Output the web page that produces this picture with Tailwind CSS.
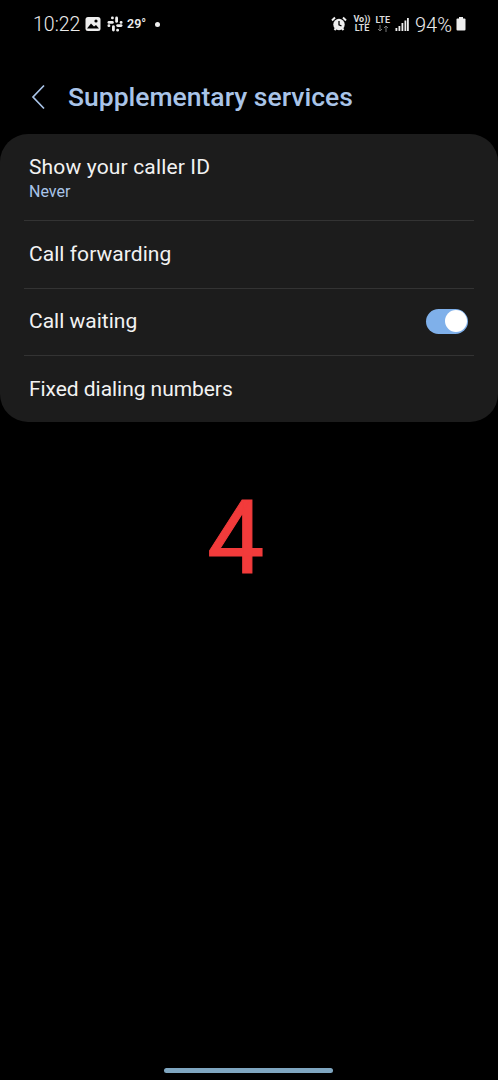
<!DOCTYPE html>
<html lang="en">
<head>
  <meta charset="UTF-8">
  <meta name="viewport" content="width=device-width, initial-scale=1.0">
  <title>Supplementary services</title>
  <script src="https://cdn.jsdelivr.net/npm/@tailwindcss/browser@4"></script>
</head>
<body class="bg-black text-white font-['Roboto',sans-serif]">
<div class="flex flex-col h-[1080px] w-[498px] overflow-hidden">

  <!-- status bar -->
  <div class="flex items-center h-[48px] pl-[33px] pr-[32px] text-[#ececec]">
    <span class="text-[19.5px] font-light w-[47px] mt-[1px]">10:22</span>
    <svg class="ml-[5px]" width="16" height="16" viewBox="0 0 16 16"><rect x="0.5" y="1" width="15" height="14" rx="2.5" fill="#eee"/><circle cx="11" cy="5" r="1.6" fill="#000"/><path d="M2 12.5 L6 7.5 L9 10.5 L11 9 L14 12.5 Z" fill="#000"/></svg>
    <svg class="ml-[6px]" width="16" height="16" viewBox="0 0 16 16" fill="#eee"><rect x="0.5" y="5" width="6.3" height="2.8" rx="1.4"/><rect x="4" y="0.5" width="2.8" height="2.8" rx="1.2"/><rect x="8.2" y="0.5" width="2.8" height="6.3" rx="1.4"/><rect x="12.7" y="5" width="2.8" height="2.8" rx="1.2"/><rect x="9.2" y="8.2" width="6.3" height="2.8" rx="1.4"/><rect x="9.2" y="12.7" width="2.8" height="2.8" rx="1.2"/><rect x="5" y="9.2" width="2.8" height="6.3" rx="1.4"/><rect x="0.5" y="8.2" width="2.8" height="2.8" rx="1.2"/></svg>
    <span class="ml-[4px] text-[12.5px] font-semibold">29°</span>
    <span class="ml-[9px] w-[5px] h-[5px] rounded-full bg-[#eee]"></span>

    <div class="ml-auto flex items-center">
      <svg width="16" height="16" viewBox="0 0 16 16"><path d="M1 4.5 L4 1.5 M15 4.5 L12 1.5 M3.5 14 L4.8 12.5 M12.5 14 L11.2 12.5" stroke="#eee" stroke-width="2" fill="none"/><circle cx="8" cy="8.5" r="5.7" fill="#eee"/><path d="M8 5 V8.8 L10.5 10" stroke="#000" stroke-width="1.3" fill="none"/></svg>
      <div class="ml-[6px] flex flex-col items-center text-[9px] leading-[9px] font-bold text-[#dcdcdc]">
        <span>Vo))</span><span>LTE</span>
      </div>
      <div class="ml-[5px] flex flex-col items-center">
        <span class="text-[9px] leading-[9px] font-bold text-[#dcdcdc]">LTE</span>
        <svg width="12" height="7" viewBox="0 0 12 7"><path d="M3 0 V6 M1 4 L3 6 L5 4" stroke="#777" fill="none"/><path d="M9 7 V1 M7 3 L9 1 L11 3" stroke="#777" fill="none"/></svg>
      </div>
      <svg class="ml-[5px]" width="14" height="14" viewBox="0 0 14 14" fill="#eee"><rect x="0.5" y="11" width="1.8" height="3"/><rect x="3.5" y="9" width="1.8" height="5"/><rect x="6.5" y="6" width="1.8" height="8"/><rect x="9.5" y="3.5" width="1.8" height="10.5"/><rect x="12" y="1" width="1.8" height="13"/></svg>
      <span class="ml-[6px] text-[20px] font-light mt-[1px]">94%</span>
      <svg class="ml-[4px]" width="10" height="14" viewBox="0 0 10 14" fill="#eee"><rect x="3" y="0" width="4" height="2"/><rect x="0.5" y="1.5" width="9" height="12" rx="1"/></svg>
    </div>
  </div>

  <!-- header -->
  <div class="flex items-center h-[86px] pl-[30px] pt-[12px]">
    <svg width="16" height="26" viewBox="0 0 16 26" fill="none"><path d="M14 1.5 L3 13 L14 24.5" stroke="#a9c4e8" stroke-width="1.7"/></svg>
    <h1 class="ml-[22px] text-[26.5px] font-medium text-[#a9c4e8]">Supplementary services</h1>
  </div>

  <!-- settings card -->
  <div class="bg-[#1c1c1c] rounded-[28px] px-[24px]">
    <div class="h-[87px] pl-[5px] pt-[20px] border-b border-[#333]">
      <p class="text-[21px] leading-[26px] tracking-[0.15px] text-[#f2f2f2]">Show your caller ID</p>
      <p class="text-[16px] leading-[24px] text-[#a9c4e8]">Never</p>
    </div>
    <div class="h-[68px] pl-[5px] flex items-center border-b border-[#333]">
      <p class="text-[21px] tracking-[0.05px] text-[#f2f2f2]">Call forwarding</p>
    </div>
    <div class="h-[67px] pl-[5px] flex items-center justify-between border-b border-[#333]">
      <p class="text-[21px] text-[#f2f2f2]">Call waiting</p>
      <div class="flex items-center justify-end w-[42px] h-[25px] mr-[6px] mb-[2px] px-[1px] rounded-full bg-[#7fb0ea]">
        <span class="w-[22px] h-[22px] rounded-full bg-white"></span>
      </div>
    </div>
    <div class="h-[66px] pl-[5px] pt-[1px] flex items-center">
      <p class="text-[21px] tracking-[-0.05px] text-[#f2f2f2]">Fixed dialing numbers</p>
    </div>
  </div>

  <!-- big number -->
  <div class="mt-[56px] pl-[207px] h-[120px] text-[102px] leading-[120px] font-normal text-[#f23b3b] [-webkit-text-stroke:1px_#f23b3b]">4</div>

  <!-- home indicator -->
  <div class="mt-auto mb-[7px] ml-[164px] w-[169px] h-[5px] rounded-full bg-[#7fa6c0]"></div>
</div>
</body>
</html>
